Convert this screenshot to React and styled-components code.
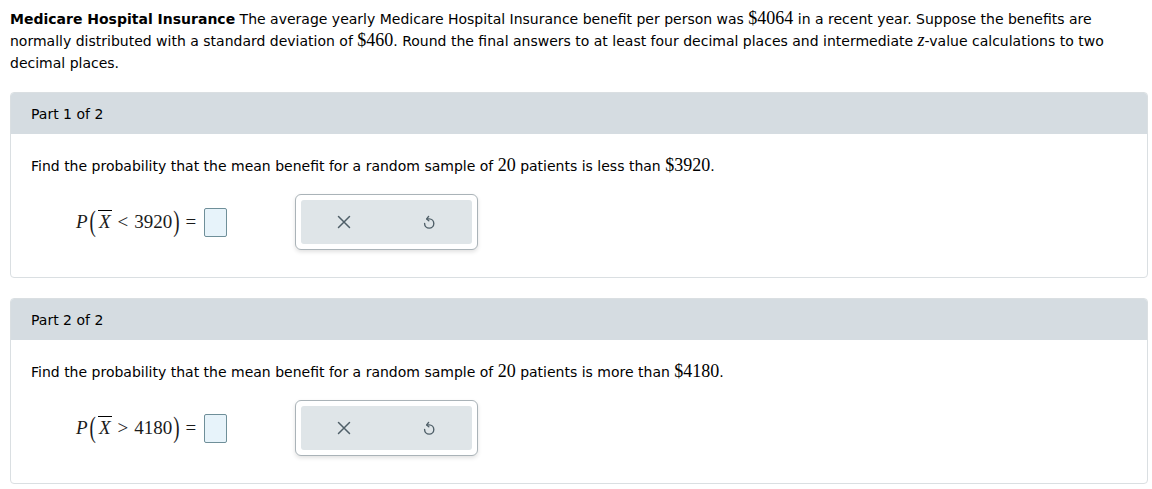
import React from "react";
import styled, { createGlobalStyle } from "styled-components";

const Global = createGlobalStyle`
  html, body { margin: 0; padding: 0; background: #fff; }
  body { font-family: "DejaVu Sans", Verdana, sans-serif; font-size: 14px; color: #000; }
`;

const Page = styled.div`
  width: 1152px;
  padding: 8px 4px 0 10px;
  box-sizing: border-box;
`;

const Intro = styled.p`
  margin: 0 0 18px 0;
  line-height: 22px;
  padding-right: 36px;
`;

const Bold = styled.b`
  font-weight: bold;
`;

const M = styled.span`
  font-family: "Liberation Serif", "Times New Roman", serif;
  font-size: 18px;
  line-height: 18px;
  font-style: ${(p) => (p.$i ? "italic" : "normal")};
`;

const Card = styled.section`
  border: 1px solid #dadfe2;
  border-radius: 4px;
  margin-bottom: 20px;
  overflow: hidden;
`;

const CardHeader = styled.div`
  height: 41px;
  background: #d5dce1;
  display: flex;
  align-items: center;
  padding-left: 20px;
`;

const CardBody = styled.div`
  padding: 22px 20px 27px 20px;
`;

const Question = styled.div`
  line-height: 20px;
`;

const AnswerRow = styled.div`
  display: flex;
  align-items: center;
  margin-top: 18px;
`;

const Expr = styled.div`
  display: flex;
  align-items: center;
  margin-left: 45px;
  font-family: "Liberation Serif", "Times New Roman", serif;
  font-size: 19px;
  color: #1a1a1a;
  width: 219px;
`;

const Italic = styled.span`
  font-style: italic;
`;

const Paren = styled.span`
  display: inline-block;
  transform: scaleY(1.5);
  margin: 0 ${(p) => p.$m || 2}px;
`;

const Bar = styled.span`
  font-style: italic;
  border-top: 1px solid #000;
  line-height: 19px;
  padding: 1px 1px 0 1px;
  margin-top: -3px;
`;

const Gap = styled.span`
  margin: 0 ${(p) => p.$m || 5}px;
`;

const Box = styled.span`
  display: inline-block;
  width: 21px;
  height: 27px;
  border: 1.5px solid #6f8f99;
  border-radius: 2px;
  background: #e7f3fa;
  margin-left: 3px;
`;

const Panel = styled.div`
  border: 1px solid #aab3b8;
  border-radius: 6px;
  background: #fff;
  padding: 5px;
  box-shadow: 0 2px 4px rgba(0, 0, 0, 0.12);
`;

const Tools = styled.div`
  width: 171px;
  height: 44px;
  background: #dfe5e8;
  border-radius: 3px;
  display: flex;
  align-items: center;
  justify-content: space-around;
`;

const IconBtn = styled.button`
  border: none;
  background: transparent;
  padding: 0;
  width: 40px;
  height: 40px;
  display: flex;
  align-items: center;
  justify-content: center;
  color: #4f5f68;
`;

const XIcon = () => (
  <svg width="14" height="14" viewBox="0 0 14 14" fill="none" stroke="currentColor" strokeWidth="1.5" strokeLinecap="round">
    <path d="M1.5 1.5 L12.5 12.5 M12.5 1.5 L1.5 12.5" />
  </svg>
);

const UndoIcon = () => (
  <svg width="14" height="16" viewBox="0 0 14 16" fill="none" stroke="currentColor" strokeWidth="1.4" strokeLinecap="round" strokeLinejoin="round">
    <path d="M2.6 9.5 A4.6 4.6 0 1 0 7.2 4.9 L5 4.9" />
    <path d="M6.6 2.4 L4.7 4.9 L6.8 6.8" />
  </svg>
);

const Part = ({ n, value, op }) => (
  <Card>
    <CardHeader>Part {n} of 2</CardHeader>
    <CardBody>
      <Question>
        Find the probability that the mean benefit for a random sample of <M>20</M> patients is {op === "<" ? "less" : "more"} than <M>${value}</M>.
      </Question>
      <AnswerRow>
        <Expr>
          <Italic>P</Italic>
          <Paren $m={2}>(</Paren>
          <Bar>X</Bar>
          <Gap $m={6}>{op}</Gap>
          <span>{value}</span>
          <Paren $m={1}>)</Paren>
          <Gap $m={5}>=</Gap>
          <Box />
        </Expr>
        <Panel>
          <Tools>
            <IconBtn aria-label="clear"><XIcon /></IconBtn>
            <IconBtn aria-label="undo"><UndoIcon /></IconBtn>
          </Tools>
        </Panel>
      </AnswerRow>
    </CardBody>
  </Card>
);

export default function App() {
  return (
    <Page>
      <Global />
      <Intro>
        <Bold>Medicare Hospital Insurance</Bold> The average yearly Medicare Hospital Insurance benefit per person was <M>$4064</M> in a recent year. Suppose the benefits are normally distributed with a standard deviation of <M>$460</M>. Round the final answers to at least four decimal places and intermediate <M $i>z</M>-value calculations to two decimal places.
      </Intro>
      <Part n={1} value={3920} op="<" />
      <Part n={2} value={4180} op=">" />
    </Page>
  );
}
